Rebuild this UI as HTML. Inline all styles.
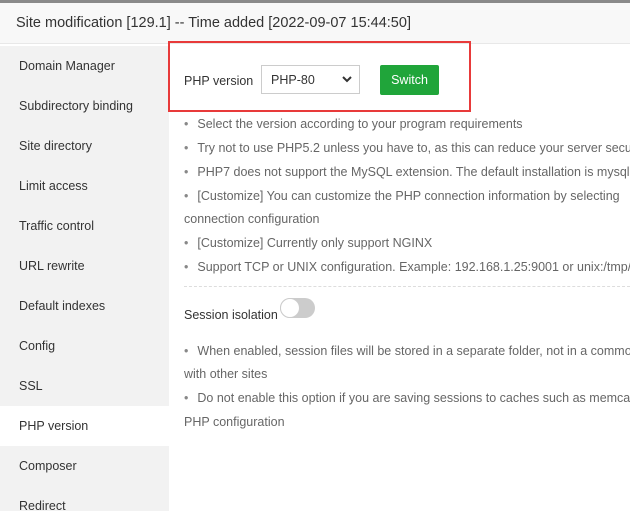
<!DOCTYPE html>
<html><head><style>
html,body{margin:0;width:630px;height:511px;overflow:hidden}
body{background:#fff;font-family:"Liberation Sans",sans-serif;position:relative}
#w{position:absolute;left:0;top:0;width:630px;height:511px;overflow:hidden}
.top{position:absolute;left:0;top:0;width:630px;height:3px;background:#8a8a8a}
.hd{position:absolute;left:0;top:3px;width:630px;height:41px;background:#f8f8f8;border-bottom:1px solid #e8e8e8;font-size:14.5px;color:#333;line-height:41px;padding-left:16px;box-sizing:border-box}
.sb{position:absolute;left:0;top:46px;width:169px;height:466px;background:#f2f2f2}
.sb div{height:40px;line-height:40px;padding-left:19px;font-size:12.5px;color:#333}
.sb .a{background:#fff}
.t{position:absolute;font-size:12.5px;color:#666;white-space:nowrap}
.b::before{content:"•";margin-right:9px;color:#888}
</style></head><body><div id="w">
<div class="top"></div>
<div class="hd">Site modification [129.1] -- Time added [2022-09-07 15:44:50]</div>
<div class="sb">
<div>Domain Manager</div><div>Subdirectory binding</div><div>Site directory</div><div>Limit access</div><div>Traffic control</div><div>URL rewrite</div><div>Default indexes</div><div>Config</div><div>SSL</div><div class="a">PHP version</div><div>Composer</div><div>Redirect</div>
</div>
<div style="position:absolute;left:168px;top:41px;width:303px;height:71px;border:2px solid #e83a3a;box-sizing:border-box"></div>
<div class="t" style="left:184px;top:74px;color:#333">PHP version</div>
<div style="position:absolute;left:261px;top:65px;width:99px;height:29px;border:1px solid #ccc;box-sizing:border-box;font-size:12.5px;color:#333;line-height:28px;padding-left:9px">PHP-80
<svg style="position:absolute;right:7px;top:10px" width="10" height="7" viewBox="0 0 10 7"><path d="M1 1l4 4 4-4" stroke="#333" stroke-width="2" fill="none"/></svg></div>
<div style="position:absolute;left:380px;top:65px;width:59px;height:30px;background:#20a53a;border-radius:2px;color:#fff;font-size:12.5px;line-height:31px;text-align:center">Switch</div>
<div class="t b" style="left:184px;top:117px">Select the version according to your program requirements</div>
<div class="t b" style="left:184px;top:141px">Try not to use PHP5.2 unless you have to, as this can reduce your server security</div>
<div class="t b" style="left:184px;top:165px">PHP7 does not support the MySQL extension. The default installation is mysqli</div>
<div class="t b" style="left:184px;top:189px">[Customize] You can customize the PHP connection information by selecting</div>
<div class="t" style="left:184px;top:212px">connection configuration</div>
<div class="t b" style="left:184px;top:236px">[Customize] Currently only support NGINX</div>
<div class="t b" style="left:184px;top:260px">Support TCP or UNIX configuration. Example: 192.168.1.25:9001 or unix:/tmp/php.sock</div>
<div style="position:absolute;left:184px;top:286px;width:446px;border-top:1px dashed #ddd"></div>
<div class="t" style="left:184px;top:308px;color:#333">Session isolation</div>
<div style="position:absolute;left:280px;top:298px;width:35px;height:20px;border-radius:10px;background:#ccc"></div>
<div style="position:absolute;left:280px;top:298px;width:18px;height:18px;border-radius:50%;background:#fff;border:1px solid #ccc"></div>
<div class="t b" style="left:184px;top:344px">When enabled, session files will be stored in a separate folder, not in a common folder</div>
<div class="t" style="left:184px;top:367px">with other sites</div>
<div class="t b" style="left:184px;top:391px">Do not enable this option if you are saving sessions to caches such as memcache</div>
<div class="t" style="left:184px;top:415px">PHP configuration</div>
</div></body></html>
